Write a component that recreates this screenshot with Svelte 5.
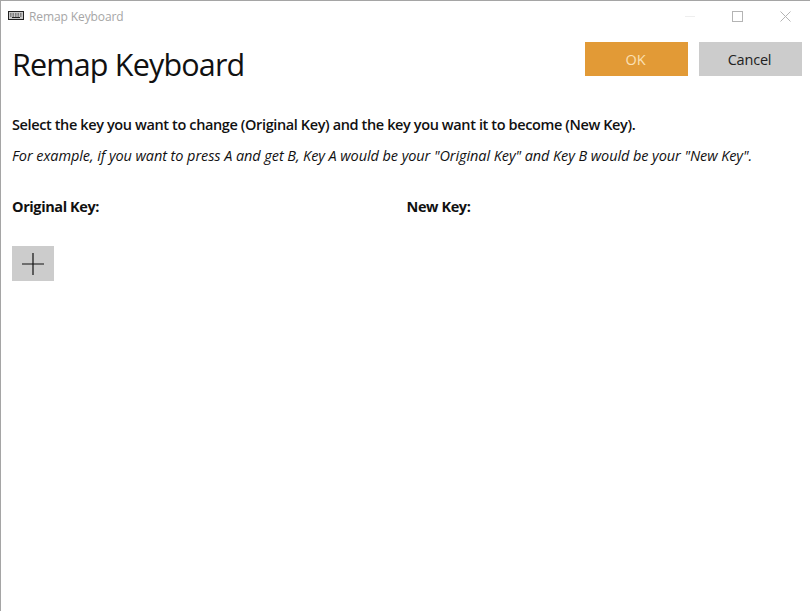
<script>
	const columns = ['Original Key:', 'New Key:'];
</script>

<div class="window">
	<header class="titlebar">
		<svg class="app-icon" width="16" height="9" viewBox="0 0 16 9">
			<rect x="0.5" y="0.5" width="15" height="8" fill="#c8c8c8" stroke="#222" />
			<path d="M2 3h12" stroke="#333" stroke-dasharray="1.5 1" />
			<path d="M2 5h12" stroke="#444" stroke-dasharray="1.5 1" />
			<path d="M4 6.5h8" stroke="#222" />
		</svg>
		<span class="window-title">Remap Keyboard</span>
		<div class="window-controls">
			<svg width="10" height="10" viewBox="0 0 10 10"><path d="M0 5.5h10" stroke="#eee" /></svg>
			<svg width="11" height="11" viewBox="0 0 11 11"><rect x="0.5" y="0.5" width="10" height="10" fill="none" stroke="#b4b4b4" /></svg>
			<svg width="11" height="11" viewBox="0 0 11 11"><path d="M0.5 0.5l10 10M10.5 0.5l-10 10" stroke="#b4b4b4" /></svg>
		</div>
	</header>

	<main class="content">
		<div class="heading-row">
			<h1>Remap Keyboard</h1>
			<div class="actions">
				<button class="ok">OK</button>
				<button class="cancel">Cancel</button>
			</div>
		</div>

		<p class="lead">Select the key you want to change (Original Key) and the key you want it to become (New Key).</p>
		<p class="example">For example, if you want to press A and get B, Key A would be your "Original Key" and Key B would be your "New Key".</p>

		<div class="columns">
			{#each columns as column}
				<span class="column-label">{column}</span>
			{/each}
		</div>

		<button class="add" aria-label="Add">
			<svg width="22" height="22" viewBox="0 0 22 22"><path d="M0 11h22M11 0v22" stroke="#111" stroke-width="1.2" /></svg>
		</button>
	</main>
</div>

<style>
	:global(body) {
		margin: 0;
		background: #fff;
	}

	.window {
		box-sizing: border-box;
		width: 810px;
		height: 611px;
		border-top: 1px solid #a5a5a5;
		border-left: 1px solid #a5a5a5;
		font-family: 'Open Sans', 'Noto Sans', sans-serif;
		color: #111;
		overflow: hidden;
	}

	.titlebar {
		display: flex;
		align-items: center;
		height: 30px;
		padding-left: 7px;
	}

	.app-icon {
		margin-right: 5px;
		margin-top: -1px;
	}

	.window-title {
		font-size: 12px;
		color: #a6a6a6;
		letter-spacing: -0.1px;
	}

	.window-controls {
		display: flex;
		align-items: center;
		gap: 37px;
		margin-left: auto;
		padding-right: 19px;
	}

	.content {
		padding: 0 8px 0 11px;
	}

	.heading-row {
		display: flex;
		justify-content: space-between;
		align-items: flex-start;
		height: 84px;
	}

	h1 {
		margin: 9px 0 0;
		font-size: 30.5px;
		font-weight: 400;
		line-height: 48px;
		letter-spacing: -0.82px;
	}

	.actions {
		display: flex;
		gap: 11px;
		margin-top: 11px;
	}

	.actions button {
		width: 103px;
		height: 34px;
		border: none;
		padding: 0 2px 0 0;
		font-family: inherit;
		font-size: 14.5px;
		letter-spacing: -0.2px;
	}

	.ok {
		background: #e29a36;
		color: #fbe0b4;
	}

	.cancel {
		background: #cccccc;
		color: #222;
	}

	.lead {
		margin: 0;
		font-size: 14.5px;
		font-weight: 600;
		line-height: 20px;
		letter-spacing: -0.38px;
		white-space: nowrap;
	}

	.example {
		margin: 11px 0 0;
		font-size: 14.5px;
		font-style: italic;
		line-height: 20px;
		letter-spacing: -0.08px;
		white-space: nowrap;
	}

	.columns {
		display: grid;
		grid-template-columns: 394.5px 1fr;
		margin-top: 31px;
	}

	.column-label {
		font-size: 14.5px;
		font-weight: 700;
		line-height: 20px;
		letter-spacing: -0.4px;
	}

	.add {
		display: flex;
		align-items: center;
		justify-content: center;
		width: 42px;
		height: 35px;
		margin-top: 29px;
		padding: 0;
		border: none;
		background: #cccccc;
	}
</style>
